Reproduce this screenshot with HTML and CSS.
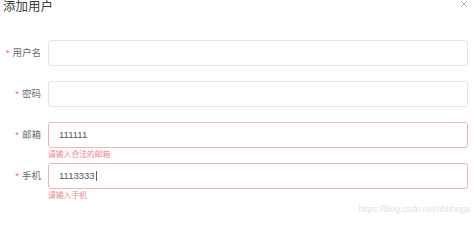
FILE: index.html
```html
<!DOCTYPE html>
<html lang="zh-CN">
<head>
<meta charset="utf-8">
<title>添加用户</title>
<link rel="stylesheet" href="styles.css">
</head>
<body>
<div class="dialog">
  <div class="header">
    <span class="title">添加用户</span>
    <svg class="close" viewBox="0 0 8 8" width="8" height="8"><path d="M1 1 L7 7 M7 1 L1 7" stroke="#b4b6bb" stroke-width="1" fill="none"/></svg>
  </div>
  <form class="form">
    <div class="item">
      <label class="label"><span class="star">*</span>用户名</label>
      <div class="content">
        <div class="field"></div>
        <div class="msg"></div>
      </div>
    </div>
    <div class="item">
      <label class="label"><span class="star">*</span>密码</label>
      <div class="content">
        <div class="field"></div>
        <div class="msg"></div>
      </div>
    </div>
    <div class="item">
      <label class="label"><span class="star">*</span>邮箱</label>
      <div class="content">
        <div class="field error">111111</div>
        <div class="msg">请输入合法的邮箱</div>
      </div>
    </div>
    <div class="item">
      <label class="label"><span class="star">*</span>手机</label>
      <div class="content">
        <div class="field error">1113333<span class="caret"></span></div>
        <div class="msg">请输入手机</div>
      </div>
    </div>
  </form>
  <div class="watermark">https://blog.csdn.net/nbbhnga</div>
</div>
</body>
</html>
```
FILE: styles.css
```css
html, body {
  margin: 0;
  padding: 0;
  background: #ffffff;
}
body {
  font-family: "Liberation Sans", "Noto Sans CJK SC", sans-serif;
  width: 474px;
  height: 218px;
  overflow: hidden;
}
.dialog {
  position: relative;
  height: 218px;
}
.header {
  display: flex;
  justify-content: space-between;
  align-items: flex-start;
  padding: 0 6px 0 3px;
  height: 40px;
}
.title {
  font-size: 12.5px;
  line-height: 14px;
  color: #3a3b3e;
}
.form {
  display: flex;
  flex-direction: column;
}
.item {
  display: grid;
  grid-template-columns: 48px 420px;
}
.label {
  height: 26px;
  line-height: 26px;
  font-size: 9.5px;
  color: #6a6c70;
  text-align: right;
  padding-right: 7px;
}
.star {
  color: #f56c6c;
  margin-right: 3px;
}
.field {
  box-sizing: border-box;
  height: 26px;
  border: 1px solid #e4e5e8;
  border-radius: 3px;
  padding-left: 10px;
  font-size: 9.5px;
  line-height: 24px;
  color: #55575b;
  display: flex;
  align-items: center;
}
.field.error {
  border-color: #f4b2b5;
}
.caret {
  display: inline-block;
  width: 1px;
  height: 10px;
  background: #606266;
  margin-left: 1px;
}
.msg {
  height: 15px;
  line-height: 14px;
  font-size: 7.8px;
  color: #f3868a;
}
.watermark {
  position: absolute;
  right: 4px;
  bottom: 4px;
  font-size: 8.5px;
  color: #e2e2e2;
}
```
